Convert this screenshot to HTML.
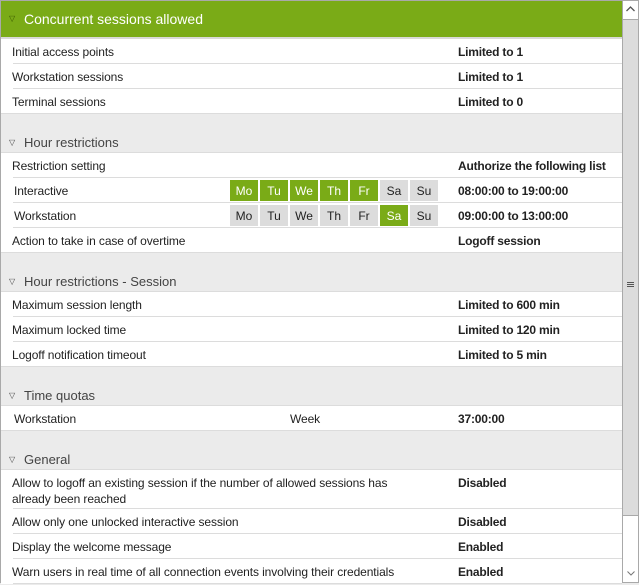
<!DOCTYPE html><html><head><style>
*{margin:0;padding:0;box-sizing:border-box}
body{width:639px;height:583px;overflow:hidden;background:#ebebeb;font-family:"Liberation Sans",sans-serif;font-size:12px;color:#222;position:relative}
.frame{position:absolute;left:0;top:0;width:639px;height:583px;border:1px solid #a9a9a9;border-right:none}
.hdr{position:absolute;left:1px;top:1px;width:621px;background:#7aab17;color:#fff;font-size:14px;padding-left:23px;border-bottom:2px solid #d9d9d9;height:38px;line-height:36px}
.tri{position:absolute;left:8px;font-size:8px;color:#444}
.row{position:absolute;left:1px;width:621px;height:25px;background:#fff;line-height:26px}
.row:after{content:"";position:absolute;left:12px;right:0;bottom:0;height:1px;background:#dcdcdc}
.row.last:after{left:0}
.t{position:absolute;left:11px;white-space:nowrap;letter-spacing:-0.1px}
.v{position:absolute;left:457px;font-weight:bold;white-space:nowrap;letter-spacing:-0.2px}
.sec{position:absolute;left:1px;width:621px;color:#444;font-size:13px;border-bottom:1px solid #dcdcdc}
.sec span{position:absolute;left:23px;bottom:2px}
.sec i{position:absolute;left:8px;bottom:5px;font-style:normal;font-size:8px}
.d{position:absolute;top:2px;width:28px;height:21px;background:#dcdcdc;text-align:center;line-height:22px;color:#222}
.d.g{background:#7aab17;color:#fff}
.sb{position:absolute;left:622px;top:0;width:17px;height:583px;background:#fff;border:1px solid #a9a9a9}
.th{position:absolute;left:0;top:18px;width:15px;height:497px;background:#dcdcdc;border-top:1px solid #a9a9a9;border-bottom:1px solid #a9a9a9}
</style></head><body>
<div class="frame"></div>
<div class="hdr"><span class="tri" style="color:#3a5a00;font-size:8px">▽</span>Concurrent sessions allowed</div>
<div class="row" style="top:39px"><span class="t">Initial access points</span><span class="v">Limited to 1</span></div>
<div class="row" style="top:64px"><span class="t">Workstation sessions</span><span class="v">Limited to 1</span></div>
<div class="row last" style="top:89px"><span class="t">Terminal sessions</span><span class="v">Limited to 0</span></div>
<div class="sec" style="top:114px;height:39px"><i>▽</i><span>Hour restrictions</span></div>
<div class="row" style="top:153px"><span class="t">Restriction setting</span><span class="v">Authorize the following list</span></div>
<div class="row" style="top:178px"><span class="t" style="left:13px">Interactive</span>
<div class="d g" style="left:229px">Mo</div><div class="d g" style="left:259px">Tu</div><div class="d g" style="left:289px">We</div><div class="d g" style="left:319px">Th</div><div class="d g" style="left:349px">Fr</div><div class="d" style="left:379px">Sa</div><div class="d" style="left:409px">Su</div>
<span class="v">08:00:00 to 19:00:00</span></div>
<div class="row" style="top:203px"><span class="t" style="left:13px">Workstation</span>
<div class="d" style="left:229px">Mo</div><div class="d" style="left:259px">Tu</div><div class="d" style="left:289px">We</div><div class="d" style="left:319px">Th</div><div class="d" style="left:349px">Fr</div><div class="d g" style="left:379px">Sa</div><div class="d" style="left:409px">Su</div>
<span class="v">09:00:00 to 13:00:00</span></div>
<div class="row last" style="top:228px"><span class="t">Action to take in case of overtime</span><span class="v">Logoff session</span></div>
<div class="sec" style="top:253px;height:39px"><i>▽</i><span>Hour restrictions - Session</span></div>
<div class="row" style="top:292px"><span class="t">Maximum session length</span><span class="v">Limited to 600 min</span></div>
<div class="row" style="top:317px"><span class="t">Maximum locked time</span><span class="v">Limited to 120 min</span></div>
<div class="row last" style="top:342px"><span class="t">Logoff notification timeout</span><span class="v">Limited to 5 min</span></div>
<div class="sec" style="top:367px;height:39px"><i>▽</i><span>Time quotas</span></div>
<div class="row last" style="top:406px"><span class="t" style="left:13px">Workstation</span><span class="t" style="left:289px">Week</span><span class="v">37:00:00</span></div>
<div class="sec" style="top:431px;height:39px"><i>▽</i><span>General</span></div>
<div class="row" style="top:470px;height:39px;line-height:16px"><span class="t" style="top:5px">Allow to logoff an existing session if the number of allowed sessions has<br>already been reached</span><span class="v" style="top:5px">Disabled</span></div>
<div class="row" style="top:509px"><span class="t">Allow only one unlocked interactive session</span><span class="v">Disabled</span></div>
<div class="row" style="top:534px"><span class="t">Display the welcome message</span><span class="v">Enabled</span></div>
<div class="row" style="top:559px"><span class="t">Warn users in real time of all connection events involving their credentials</span><span class="v">Enabled</span></div>
<div class="sb"><svg style="position:absolute;left:3px;top:5px" width="9" height="6"><path d="M0.5 5 L4.5 1 L8.5 5" stroke="#555" fill="none" stroke-width="1.3"/></svg><div class="th"><div style="position:absolute;left:4px;top:262px;width:7px;height:5px;border-top:1px solid #555;border-bottom:1px solid #555"><div style="margin-top:1px;border-top:1px solid #555"></div></div></div><svg style="position:absolute;left:4px;top:570px" width="8" height="5"><path d="M0.5 0.5 L4 4 L7.5 0.5" stroke="#777" fill="none"/></svg></div>
</body></html>
